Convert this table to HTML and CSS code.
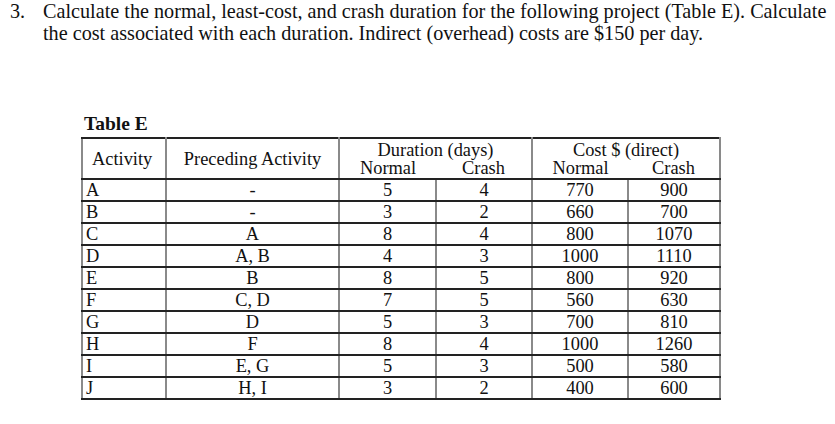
FILE: index.html
```html
<!DOCTYPE html>
<html>
<head>
<meta charset="utf-8">
<link rel="stylesheet" href="styles.css">
</head>
<body>
<div class="question">
  <div class="num">3.</div>
  <div class="text">Calculate the normal, least-cost, and crash duration for the following project (Table E). Calculate<br>the cost associated with each duration. Indirect (overhead) costs are $150 per day.</div>
</div>
<div class="table-wrap">
  <div class="caption">Table E</div>
  <table class="tbl">
    <colgroup>
      <col class="c1"><col class="c2"><col class="c3"><col class="c4"><col class="c5"><col class="c6">
    </colgroup>
    <thead>
      <tr class="h1">
        <th rowspan="2" class="act">Activity</th>
        <th rowspan="2">Preceding Activity</th>
        <th colspan="2" class="grp">Duration (days)</th>
        <th colspan="2" class="grp">Cost $ (direct)</th>
      </tr>
      <tr class="h2">
        <th class="sub nodiv">Normal</th>
        <th class="sub">Crash</th>
        <th class="sub nodiv">Normal</th>
        <th class="sub">Crash</th>
      </tr>
    </thead>
    <tbody>
      <tr><td class="act">A</td><td>-</td><td>5</td><td>4</td><td>770</td><td>900</td></tr>
      <tr><td class="act">B</td><td>-</td><td>3</td><td>2</td><td>660</td><td>700</td></tr>
      <tr><td class="act">C</td><td>A</td><td>8</td><td>4</td><td>800</td><td>1070</td></tr>
      <tr><td class="act">D</td><td>A, B</td><td>4</td><td>3</td><td>1000</td><td>1110</td></tr>
      <tr><td class="act">E</td><td>B</td><td>8</td><td>5</td><td>800</td><td>920</td></tr>
      <tr><td class="act">F</td><td>C, D</td><td>7</td><td>5</td><td>560</td><td>630</td></tr>
      <tr><td class="act">G</td><td>D</td><td>5</td><td>3</td><td>700</td><td>810</td></tr>
      <tr><td class="act">H</td><td>F</td><td>8</td><td>4</td><td>1000</td><td>1260</td></tr>
      <tr><td class="act">I</td><td>E, G</td><td>5</td><td>3</td><td>500</td><td>580</td></tr>
      <tr><td class="act">J</td><td>H, I</td><td>3</td><td>2</td><td>400</td><td>600</td></tr>
    </tbody>
  </table>
</div>
</body>
</html>
```

FILE: styles.css
```css
html, body {
  margin: 0;
  padding: 0;
  background: #ffffff;
}
body {
  font-family: "Times New Roman", "Liberation Serif", serif;
  color: #111;
  width: 835px;
  height: 424px;
  overflow: hidden;
}
.question {
  display: flex;
  padding-top: 0;
  font-size: 20.2px;
  line-height: 22px;
}
.num {
  width: 33px;
  padding-left: 10px;
}
.text {
  flex: 1;
  white-space: nowrap;
}
.table-wrap {
  padding-left: 81px;
  padding-top: 70px;
}
.caption {
  font-weight: bold;
  font-size: 19.5px;
  line-height: 20px;
  padding-left: 3px;
  margin-bottom: 3px;
}
.tbl {
  border-collapse: collapse;
  font-size: 18.4px;
  table-layout: fixed;
  border: 2px solid #555;
}
.c1 { width: 84px; }
.c2 { width: 173px; }
.c3 { width: 97px; }
.c4 { width: 96px; }
.c5 { width: 96px; }
.c6 { width: 92px; }
.tbl th, .tbl td {
  font-weight: normal;
  padding: 0;
  text-align: center;
  border-left: 2px solid #8a8a8a;
  border-right: 2px solid #8a8a8a;
  border-top: 2px solid #222;
  border-bottom: 2px solid #222;
  line-height: 18px;
}
.tbl td {
  height: 20px;
}
.tbl th.act {
  text-align: left;
  padding-left: 9px;
}
.tbl td.act {
  text-align: left;
  padding-left: 3px;
}
.tbl .h1 th {
  height: 20px;
}
.tbl .h1 th.grp {
  border-bottom: none;
  vertical-align: bottom;
}
.tbl .h2 th {
  border-top: none;
  height: 19px;
  vertical-align: top;
}
.tbl .h2 th.nodiv {
  border-right: none;
}
.tbl .h2 th.nodiv + th {
  border-left: none;
}
```
